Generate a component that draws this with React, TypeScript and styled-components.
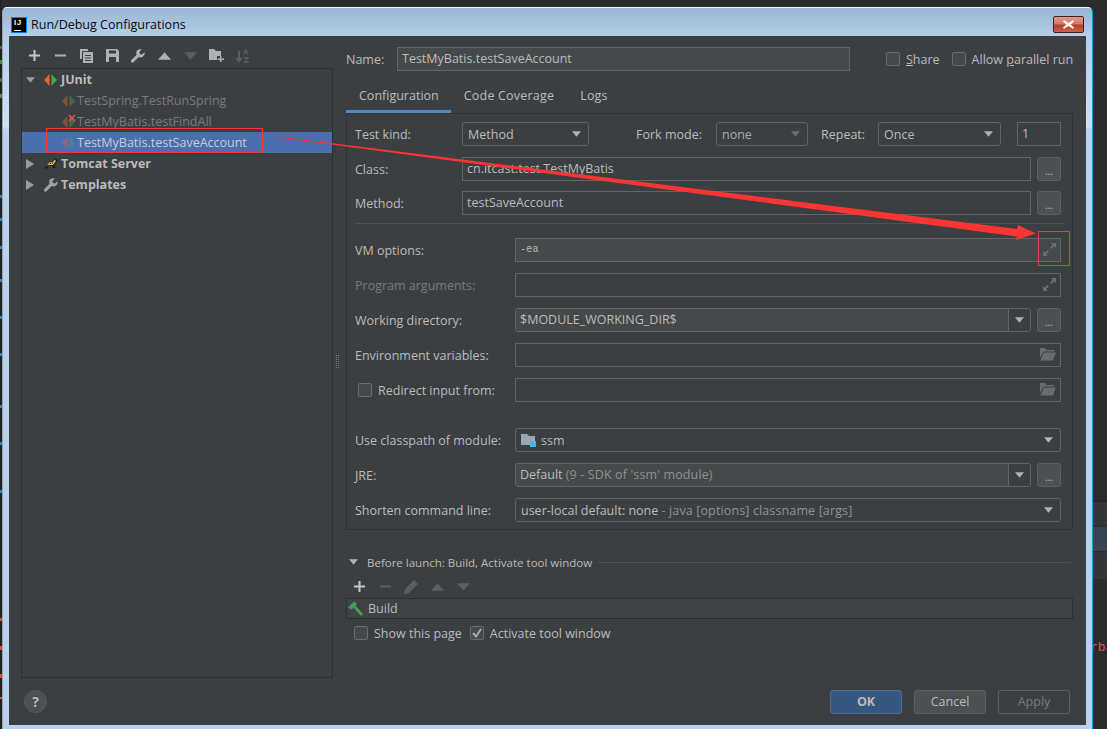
import React from "react";
import styled, { createGlobalStyle } from "styled-components";

const Global = createGlobalStyle`
  html, body { margin: 0; padding: 0; background: #2b2b2b; }
  * { box-sizing: border-box; }
  #root { width: 1107px; height: 729px; overflow: hidden; }
`;

const Page = styled.div`
  position: relative;
  width: 1107px;
  height: 729px;
  display: flex;
  overflow: hidden;
  background: #2b2b2b;
  font-family: "Open Sans", "Noto Sans", sans-serif;
  font-size: 12.5px;
  color: #bbbbbb;
  white-space: nowrap;
`;

const LeftStrip = styled.div`
  width: 2px;
  flex: none;
  background: linear-gradient(#222 0 46px, #3f6a44 46px 49px, #222 49px 60px, #4c8f4c 60px 64px, #222 64px 78px, #3f6a44 78px 82px, #222 82px 94px, #4c8f4c 94px 98px,
    #222 98px 195px, #3c7fb0 195px 198px, #222 198px 218px, #3c7fb0 218px 221px, #222 221px 246px, #3c7fb0 246px 249px, #222 249px 279px, #3c7fb0 279px 282px,
    #222 282px 316px, #3c7fb0 316px 319px, #222 319px 353px, #3c7fb0 353px 356px, #222 356px 405px, #3c7fb0 405px 408px, #222 408px 442px, #3c7fb0 442px 445px,
    #222 445px 490px, #3c7fb0 490px 493px, #222 493px 618px, #e04b3a 618px 621px, #222 621px 646px, #e04b3a 646px 650px, #222 650px 674px, #e04b3a 674px 678px,
    #222 678px 697px, #e04b3a 697px 699px, #222 699px);
`;

const Win = styled.div`
  width: 1091px;
  flex: none;
  margin-top: 7px;
  display: flex;
  flex-direction: column;
  border-top: 1px solid #f2f7fb;
  border-right: 1px solid #0a9fc4;
  border-left: 1px solid #8fa3b8;
  border-radius: 5px 5px 0 0;
  background: linear-gradient(#9ab6d3 0, #b5cee8 28px, #d0e1f2 118px, #b9d1ea 122px);
  padding: 0 6px 4px;
`;

const TitleBar = styled.div`
  height: 28px;
  flex: none;
  display: flex;
  align-items: center;
  padding: 5px 0 0 2px;
  color: #0a0a0a;
  font-size: 12.5px;
  position: relative;
`;

const AppLogo = styled.div`
  width: 16px;
  height: 16px;
  flex: none;
  margin-right: 4px;
  background: #000;
  border: 1px solid #087cfa;
  color: #fff;
  font: bold 8px/8px "Liberation Sans", sans-serif;
  padding: 1px 0 0 2px;
  position: relative;
  letter-spacing: 0.5px;
  &::after {
    content: "";
    position: absolute;
    left: 2px;
    bottom: 1px;
    width: 7px;
    height: 1px;
    background: #fff;
  }
`;

const CloseButton = styled.div`
  position: absolute;
  right: 2px;
  top: 8px;
  width: 31px;
  height: 17px;
  border: 1px solid #4a1c22;
  border-radius: 2px;
  background: linear-gradient(#dc9a8c 0, #d2796a 45%, #b8402c 55%, #c9624c 100%);
  display: flex;
  align-items: center;
  justify-content: center;
`;

const Body = styled.div`
  flex: 1;
  min-height: 0;
  display: grid;
  grid-template-columns: 327px 749px;
  grid-template-rows: 642px 47px;
  background: #3c3f41;
`;

const LeftColumn = styled.div`
  grid-column: 1;
  grid-row: 1;
  padding: 9px 0 0 12px;
  display: flex;
  flex-direction: column;
`;

const RightColumn = styled.div`
  position: relative;
  grid-column: 2;
  grid-row: 1 / span 2;
  padding: 11px 12px 0 10px;
  display: flex;
  flex-direction: column;
`;

const Grip = styled.div`
  position: absolute;
  left: 0;
  top: 319px;
  width: 4px;
  height: 14px;
  background-image: linear-gradient(#75787a 1px, transparent 1px);
  background-size: 2px 2px;
  mask-image: linear-gradient(90deg, #000 1px, transparent 1px, transparent 2px, #000 2px, #000 3px, transparent 3px);
`;

const Toolbar = styled.div<{ $top?: number; $lift?: boolean }>`
  height: 23px;
  margin-top: ${(p) => p.$top ?? 0}px;
  padding-bottom: ${(p) => (p.$lift ? 2 : 0)}px;
  flex: none;
  display: flex;
  align-items: center;
`;

const ToolButton = styled.div`
  width: 26px;
  height: 20px;
  flex: none;
  display: flex;
  align-items: center;
  justify-content: center;
`;

const Tree = styled.div`
  width: 312px;
  height: 610px;
  border: 1px solid #2d2f30;
  flex: none;
`;

const TreeRow = styled.div<{ $indent?: boolean; $selected?: boolean; $bold?: boolean; $dim?: boolean }>`
  height: 21px;
  display: flex;
  align-items: center;
  padding-left: ${(p) => (p.$indent ? 40 : 4)}px;
  background: ${(p) => (p.$selected ? "#4b6eaf" : "transparent")};
  color: ${(p) => (p.$selected ? "#c8ccd2" : p.$dim ? "#777a7c" : "#bbbbbb")};
  font-weight: ${(p) => (p.$bold ? 700 : 400)};
`;

const Disclosure = styled.div`
  width: 18px;
  flex: none;
  display: flex;
  align-items: center;
`;

const TreeIcon = styled.div<{ $tight?: boolean }>`
  width: 15px;
  height: 16px;
  margin-right: ${(p) => (p.$tight ? 0 : 2)}px;
  flex: none;
  position: relative;
  display: flex;
  align-items: center;
`;

const ErrorMark = styled.svg`
  position: absolute;
  left: 6px;
  top: 0;
`;

const Footer = styled.div`
  grid-column: 1;
  grid-row: 2;
  padding: 12px 0 0 15px;
`;

const Help = styled.div`
  width: 23px;
  height: 23px;
  border-radius: 50%;
  background: #4c5052;
  border: 1px solid #55595b;
  color: #bbbbbb;
  font-weight: 700;
  font-size: 14px;
  display: flex;
  align-items: center;
  justify-content: center;
`;

const NameRow = styled.div`
  display: flex;
  align-items: center;
  height: 24px;
  flex: none;
`;

const NameLabel = styled.div`
  width: 51px;
  flex: none;
`;

const Field = styled.div<{ $w?: number; $filled?: boolean }>`
  height: 24px;
  ${(p) => (p.$w ? `width: ${p.$w}px; flex: none;` : "flex: 1; min-width: 0;")}
  border: 1px solid #646464;
  background: ${(p) => (p.$filled ? "#45494a" : "#3c3f41")};
  display: flex;
  align-items: center;
  justify-content: space-between;
  padding: 0 4px 1px 4px;
  color: #bbbbbb;
`;

const Mono = styled.span`
  font-family: "Liberation Mono", monospace;
  font-size: 10px;
  letter-spacing: 0.2px;
`;

const Check = styled.div<{ $left?: number }>`
  width: 14px;
  height: 14px;
  flex: none;
  margin-left: ${(p) => p.$left ?? 0}px;
  margin-right: 6px;
  border: 1px solid #6b6b6b;
  border-radius: 2px;
  background: #43494a;
  display: flex;
  align-items: center;
  justify-content: center;
`;

const CheckText = styled.span``;

const Tabs = styled.div`
  display: flex;
  height: 30px;
  margin-top: 12px;
  flex: none;
`;

const Tab = styled.div<{ $active?: boolean }>`
  height: 30px;
  padding: 0 ${(p) => (p.$active ? 12 : 13)}px 2px 13px;
  letter-spacing: ${(p) => (p.$active ? 0 : 0.2)}px;
  display: flex;
  align-items: center;
  border-bottom: 3px solid ${(p) => (p.$active ? "#4a88c7" : "transparent")};
`;

const Panel = styled.div`
  width: 727px;
  height: 417px;
  flex: none;
  border: 1px solid #323232;
  padding: 8px 11px 0 8px;
  display: flex;
  flex-direction: column;
`;

const Row = styled.div<{ $top?: number }>`
  display: flex;
  align-items: center;
  height: 24px;
  flex: none;
  margin-top: ${(p) => p.$top ?? 11}px;
`;

const Label = styled.div<{ $w?: number; $off?: boolean }>`
  width: ${(p) => p.$w ?? 160}px;
  flex: none;
  color: ${(p) => (p.$off ? "#777a7c" : "#bbbbbb")};
`;

const Inline = styled.div<{ $left: number; $w: number }>`
  margin-left: ${(p) => p.$left}px;
  width: ${(p) => p.$w}px;
  flex: none;
  display: flex;
`;

const Select = styled.div<{ $w?: number; $off?: boolean }>`
  height: 24px;
  ${(p) => (p.$w ? `width: ${p.$w}px; flex: none;` : "flex: 1; min-width: 0;")}
  border: 1px solid #646464;
  border-radius: 3px;
  background: #3c3f41;
  display: flex;
  align-items: center;
  justify-content: space-between;
  padding: 0 7px 0 5px;
  color: ${(p) => (p.$off ? "#a8aaac" : "#bbbbbb")};
`;

const ModuleOption = styled.span`
  display: flex;
  align-items: center;
`;

const ComboField = styled.div`
  flex: 1;
  min-width: 0;
  height: 24px;
  border: 1px solid #646464;
  border-radius: 3px;
  display: flex;
  overflow: hidden;
`;

const ComboText = styled.div`
  flex: 1;
  min-width: 0;
  background: #45494a;
  padding: 0 4px 1px 4px;
  display: flex;
  align-items: center;
`;

const ComboArrow = styled.div`
  width: 22px;
  flex: none;
  background: #3c3f41;
  border-left: 1px solid #646464;
  display: flex;
  align-items: center;
  justify-content: center;
`;

const Browse = styled.div`
  width: 24px;
  height: 24px;
  flex: none;
  margin-left: 6px;
  border: 1px solid #5e6060;
  border-radius: 3px;
  background: #4c5052;
  display: flex;
  align-items: center;
  justify-content: center;
  color: #bbbbbb;
  font-size: 10px;
  padding-top: 3px;
`;

const Sep = styled.div`
  height: 1px;
  flex: none;
  margin: 8px -2px 14px 0;
  background: #4e5254;
`;

const RedirectLabel = styled.div`
  width: 160px;
  flex: none;
  padding-left: 3px;
  display: flex;
  align-items: center;
`;

const ModuleIcon = styled.div`
  width: 15px;
  height: 14px;
  margin-right: 5px;
  flex: none;
`;

const Gray = styled.span`
  color: #8f9294;
  letter-spacing: 0.13px;
`;

const BeforeHeader = styled.div`
  height: 20px;
  margin-top: 22px;
  padding-left: 3px;
  display: flex;
  align-items: center;
  flex: none;
  font-size: 11.5px;
`;

const BeforeArrow = styled.div`
  width: 18px;
  flex: none;
  display: flex;
  align-items: center;
`;

const BeforeLine = styled.div`
  flex: none;
  width: 473px;
  height: 1px;
  margin-left: 6px;
  background: #4e5254;
`;

const BuildRow = styled.div`
  width: 727px;
  height: 21px;
  flex: none;
  border: 1px solid #2d2f30;
  background: #404345;
  display: flex;
  align-items: center;
  padding-left: 1px;
`;

const BuildIcon = styled.div`
  width: 16px;
  height: 16px;
  flex: none;
  margin-right: 4px;
`;

const CheckRow = styled.div`
  height: 20px;
  margin-top: 4px;
  display: flex;
  align-items: center;
  padding-left: 8px;
  flex: none;
`;

const Buttons = styled.div`
  margin-top: 47px;
  padding-left: 484px;
  display: flex;
  gap: 12px;
  flex: none;
`;

const Btn = styled.div<{ $kind?: "ok" | "off" }>`
  width: 72px;
  height: 24px;
  border-radius: 3px;
  display: flex;
  align-items: center;
  justify-content: center;
  padding-bottom: 1px;
  border: 1px solid ${(p) => (p.$kind === "ok" ? "#4c708c" : "#5e6060")};
  background: ${(p) => (p.$kind === "ok" ? "#365880" : p.$kind === "off" ? "#3c3f41" : "#4c5052")};
  color: ${(p) => (p.$kind === "off" ? "#777a7c" : "#bbbbbb")};
  font-weight: ${(p) => (p.$kind === "ok" ? 700 : 400)};
`;

const RightStrip = styled.div`
  flex: 1;
  min-width: 0;
  overflow: hidden;
  background: #2b2b2b;
  display: flex;
  flex-direction: column;
  color: #e05555;
  font-family: "Liberation Mono", monospace;
  font-size: 13px;
`;

const BandLine = styled.div`
  height: 502px;
  flex: none;
  border-bottom: 1px solid #232323;
`;

const BandGrey = styled.div<{ $blue?: boolean; $h: number }>`
  height: ${(p) => p.$h}px;
  flex: none;
  background: ${(p) => (p.$blue ? "#3a4554" : "#333537")};
  border-bottom: 1px solid #2a2a2a;
`;

const ErrFrag = styled.div`
  margin-top: 59px;
  margin-left: -3px;
  line-height: 18px;
`;

const Annotations = styled.svg`
  position: absolute;
  left: 0;
  top: 0;
  pointer-events: none;
`;

const G = "#afb1b3";
const D = "#5b5e60";

const DownTri = ({ c = G, w = 9, h = 6 }: { c?: string; w?: number; h?: number }) => (
  <svg width={w} height={h} viewBox="0 0 10 6"><path d="M0 0H10L5 6Z" fill={c} /></svg>
);
const UpTri = ({ c = G }: { c?: string }) => (
  <svg width="13" height="8" viewBox="0 0 12 7"><path d="M0 7H12L6 0Z" fill={c} /></svg>
);
const DownBig = ({ c = G }: { c?: string }) => (
  <svg width="13" height="8" viewBox="0 0 12 7"><path d="M0 0H12L6 7Z" fill={c} /></svg>
);
const RightTri = () => (
  <svg width="8" height="10" viewBox="0 0 8 10"><path d="M0 0L8 5L0 10Z" fill="#9a9c9e" /></svg>
);
const Plus = () => (
  <svg width="11" height="11" viewBox="0 0 11 11"><path d="M4.5 0h2v4.5H11v2H6.5V11h-2V6.5H0v-2h4.5z" fill="#c4c6c8" /></svg>
);
const Minus = ({ c = G }: { c?: string }) => (
  <svg width="11" height="3" viewBox="0 0 11 3"><rect y="0.5" width="11" height="2" fill={c} /></svg>
);
const Copy = () => (
  <svg width="13" height="14" viewBox="0 0 13 14">
    <path d="M0 0h8v2H2v8H0z" fill={G} />
    <path d="M3 3h10v11H3z" fill={G} />
    <path d="M5 6h6v1H5zM5 8.5h6v1H5zM5 11h6v1H5z" fill="#3c3f41" />
  </svg>
);
const Save = () => (
  <svg width="13" height="13" viewBox="0 0 13 13">
    <path d="M0 0h11l2 2v11H0z" fill={G} />
    <path d="M3 1.5h7v3H3zM3 8h7v5H3z" fill="#3c3f41" />
  </svg>
);
const Wrench = ({ c = G, s = 14 }: { c?: string; s?: number }) => (
  <svg width={s} height={s} viewBox="0 0 14 14">
    <path d="M13.6 3.2 11 5.6 8.9 5 8.4 3l2.4-2.6C9 -.2 7 .3 6 1.6 5 2.9 5 4.5 5.6 5.8L0.6 10.8c-.8.8-.8 1.7-.2 2.4.7.7 1.6.7 2.4-.1l5-5c1.4.6 3 .4 4.2-.6 1.3-1.1 1.9-2.8 1.6-4.3z" fill={c} />
  </svg>
);
const FolderPlus = () => (
  <svg width="15" height="13" viewBox="0 0 15 13">
    <path d="M0 0h5l2 2h5v5H8v4H0z" fill={G} />
    <path d="M11 7h1.5v2.5H15V11h-2.5v2H11v-2H8.5V9.5H11z" fill={G} />
  </svg>
);
const SortAz = () => (
  <svg width="14" height="14" viewBox="0 0 14 14">
    <path d="M3 2h2v7h3l-4 5-4-5h3z" fill={D} />
    <path d="M10 0h1.5l2 5.5h-1.3l-.4-1.2H10l-.4 1.2H8.3zM10.3 3.3h1.2l-.6-1.8zM8.8 8h5v1l-3.3 3.5h3.3V14h-5v-1l3.3-3.6H8.8z" fill={D} />
  </svg>
);
const Pencil = () => (
  <svg width="14" height="14" viewBox="0 0 14 14"><path d="M10 0l4 4-9 9-5 1 1-5z" fill={D} /></svg>
);
const JUnitIcon = ({ dim }: { dim?: boolean }) => (
  <svg width="13" height="12" viewBox="0 0 13 12" opacity={dim ? 0.42 : 1}>
    <path d="M5.5 0v12L0 6z" fill="#e8642a" />
    <path d="M7.5 0v12L13 6z" fill="#4fa04f" />
  </svg>
);
const Tomcat = () => (
  <svg width="14" height="11" viewBox="0 0 14 11">
    <path d="M0 10l3-3 2-3 4-1 2-3 2 1 1 2-2 2-1 3 1 2H9L8 8H5l-2 3z" fill="#232323" />
    <path d="M3 7.5 5 4.500l4-.8 1.500-2 1.500 1-.8 1.500L9 7H5z" fill="#e0a93f" />
    <path d="M6 5h1v1H6zM8 4.500h1v1H8z" fill="#232323" />
  </svg>
);
const Expand = () => (
  <svg width="13" height="13" viewBox="0 0 13 13">
    <path d="M8 0h5v5l-1.800-1.800-2.700 2.700-1.400-1.400 2.700-2.700zM5 13H0V8l1.800 1.800 2.700-2.700 1.400 1.400-2.700 2.700z" fill="#6b6e70" />
  </svg>
);
const FolderOpen = () => (
  <svg width="16" height="13" viewBox="0 0 16 13">
    <path d="M0 0h5l1.500 2H14v1.500H3.500L0 10z" fill="#696c6e" />
    <path d="M3.800 4.500H16L13 12.500H0.300z" fill="#696c6e" />
  </svg>
);
const Ellipsis = () => <span>...</span>;
const Module = () => (
  <ModuleIcon>
    <svg width="15" height="14" viewBox="0 0 15 14">
      <path d="M0 1h6l2 2h6v9H0z" fill="#9aa7b0" />
      <rect x="9" y="8" width="6" height="6" fill="#40b6e0" />
    </svg>
  </ModuleIcon>
);
const Hammer = () => (
  <BuildIcon>
    <svg width="16" height="16" viewBox="0 0 16 16">
      <path d="M0 6.500 6 .5 9 3 7.500 4.500 15 13l-2 2-7.500-8.500-2 2z" fill="#499c54" />
    </svg>
  </BuildIcon>
);
const Tick = () => (
  <svg width="10" height="10" viewBox="0 0 10 10">
    <path d="M1 5l3 3.500L9 1" fill="none" stroke="#a9abad" strokeWidth="2" />
  </svg>
);

const App = () => (
  <Page>
    <Global />
    <LeftStrip />
    <Win>
      <TitleBar>
        <AppLogo>IJ</AppLogo>
        Run/Debug Configurations
        <CloseButton>
          <svg width="11" height="9" viewBox="0 0 11 9">
            <path d="M1 0.500L5.500 3.300 10 0.500 10.800 1.500 7.200 4.500 10.800 7.500 10 8.500 5.500 5.700 1 8.500 0.200 7.500 3.800 4.500 0.200 1.500z" fill="#fff" stroke="#fff" strokeWidth="0.6" />
          </svg>
        </CloseButton>
      </TitleBar>
      <Body>
        <LeftColumn>
          <Toolbar $lift>
            <ToolButton><Plus /></ToolButton>
            <ToolButton><Minus /></ToolButton>
            <ToolButton><Copy /></ToolButton>
            <ToolButton><Save /></ToolButton>
            <ToolButton><Wrench /></ToolButton>
            <ToolButton><UpTri /></ToolButton>
            <ToolButton><DownBig c={D} /></ToolButton>
            <ToolButton><FolderPlus /></ToolButton>
            <ToolButton><SortAz /></ToolButton>
          </Toolbar>
          <Tree>
            <TreeRow $bold>
              <Disclosure><DownTri c="#9a9c9e" /></Disclosure>
              <TreeIcon><JUnitIcon /></TreeIcon>
              JUnit
            </TreeRow>
            <TreeRow $indent $dim>
              <TreeIcon $tight><JUnitIcon dim /></TreeIcon>
              TestSpring.TestRunSpring
            </TreeRow>
            <TreeRow $indent $dim>
              <TreeIcon $tight>
                <JUnitIcon dim />
                <ErrorMark width="8" height="8" viewBox="0 0 8 8">
                  <path d="M1 1l6 6M7 1L1 7" stroke="#e05555" strokeWidth="1.5" />
                </ErrorMark>
              </TreeIcon>
              TestMyBatis.testFindAll
            </TreeRow>
            <TreeRow $indent $selected>
              <TreeIcon $tight><JUnitIcon dim /></TreeIcon>
              TestMyBatis.testSaveAccount
            </TreeRow>
            <TreeRow $bold>
              <Disclosure><RightTri /></Disclosure>
              <TreeIcon><Tomcat /></TreeIcon>
              Tomcat Server
            </TreeRow>
            <TreeRow $bold>
              <Disclosure><RightTri /></Disclosure>
              <TreeIcon><Wrench c="#a0a2a4" /></TreeIcon>
              Templates
            </TreeRow>
          </Tree>
        </LeftColumn>
        <RightColumn>
          <Grip />
          <NameRow>
            <NameLabel>Name:</NameLabel>
            <Field $w={453} $filled>TestMyBatis.testSaveAccount</Field>
            <Check $left={36} />
            <CheckText><u>S</u>hare</CheckText>
            <Check $left={12} />
            <CheckText>Allow <u>p</u>arallel run</CheckText>
          </NameRow>
          <Tabs>
            <Tab $active>Configuration</Tab>
            <Tab>Code Coverage</Tab>
            <Tab>Logs</Tab>
          </Tabs>
          <Panel>
            <Row $top={0}>
              <Label $w={107}>Test kind:</Label>
              <Select $w={127}>Method<DownTri /></Select>
              <Inline $left={47} $w={80}>Fork mode:</Inline>
              <Select $w={92} $off>none<DownTri c="#6b6e70" /></Select>
              <Inline $left={13} $w={57}>Repeat:</Inline>
              <Select $w={123}>Once<DownTri /></Select>
              <Inline $left={16} $w={44}><Field>1</Field></Inline>
            </Row>
            <Row>
              <Label $w={107}>Class:</Label>
              <Field>cn.itcast.test.TestMyBatis</Field>
              <Browse><Ellipsis /></Browse>
            </Row>
            <Row $top={10}>
              <Label $w={107}>Method:</Label>
              <Field>testSaveAccount</Field>
              <Browse><Ellipsis /></Browse>
            </Row>
            <Sep />
            <Row $top={0}>
              <Label>VM options:</Label>
              <Field $filled><Mono>-ea</Mono><Expand /></Field>
            </Row>
            <Row>
              <Label $off>Program arguments:</Label>
              <Field><span /><Expand /></Field>
            </Row>
            <Row>
              <Label>Working directory:</Label>
              <ComboField>
                <ComboText>$MODULE_WORKING_DIR$</ComboText>
                <ComboArrow><DownTri /></ComboArrow>
              </ComboField>
              <Browse><Ellipsis /></Browse>
            </Row>
            <Row>
              <Label>Environment variables:</Label>
              <Field><span /><FolderOpen /></Field>
            </Row>
            <Row>
              <RedirectLabel><Check />Redirect input from:</RedirectLabel>
              <Field><span /><FolderOpen /></Field>
            </Row>
            <Row $top={26}>
              <Label>Use classpath of module:</Label>
              <Select><ModuleOption><Module />ssm</ModuleOption><DownTri /></Select>
            </Row>
            <Row>
              <Label>JRE:</Label>
              <ComboField>
                <ComboText>Default&nbsp;<Gray>(9 - SDK of 'ssm' module)</Gray></ComboText>
                <ComboArrow><DownTri /></ComboArrow>
              </ComboField>
              <Browse><Ellipsis /></Browse>
            </Row>
            <Row>
              <Label>Shorten command line:</Label>
              <Select><span>user-local default: none <Gray>- java [options] classname [args]</Gray></span><DownTri /></Select>
            </Row>
          </Panel>
          <BeforeHeader>
            <BeforeArrow><DownTri w={9} h={6} /></BeforeArrow>
            Before launch: Build, Activate tool window
            <BeforeLine />
          </BeforeHeader>
          <Toolbar $top={3}>
            <ToolButton><Plus /></ToolButton>
            <ToolButton><Minus c={D} /></ToolButton>
            <ToolButton><Pencil /></ToolButton>
            <ToolButton><UpTri c={D} /></ToolButton>
            <ToolButton><DownBig c={D} /></ToolButton>
          </Toolbar>
          <BuildRow><Hammer />Build</BuildRow>
          <CheckRow>
            <Check />
            <CheckText>Show this page</CheckText>
            <Check $left={8}><Tick /></Check>
            <CheckText>Activate tool window</CheckText>
          </CheckRow>
          <Buttons>
            <Btn $kind="ok">OK</Btn>
            <Btn>Cancel</Btn>
            <Btn $kind="off">Apply</Btn>
          </Buttons>
        </RightColumn>
        <Footer><Help>?</Help></Footer>
      </Body>
    </Win>
    <RightStrip>
      <BandLine />
      <BandGrey $h={25} />
      <BandGrey $h={25} $blue />
      <BandGrey $h={28} />
      <ErrFrag>rba</ErrFrag>
    </RightStrip>
    <Annotations width="1107" height="729" viewBox="0 0 1107 729">
      <rect x="46.5" y="128.5" width="216" height="24" fill="none" stroke="#f03a3a" />
      <rect x="1038.5" y="231.5" width="31" height="34" fill="none" stroke="#e0403f" />
      <path d="M279 136.500 L1017 229 L1018 225 L1036 233.500 L1016 240 L1017 236.500 L279 137.500 Z" fill="#fb3434" />
    </Annotations>
  </Page>
);

export default App;
